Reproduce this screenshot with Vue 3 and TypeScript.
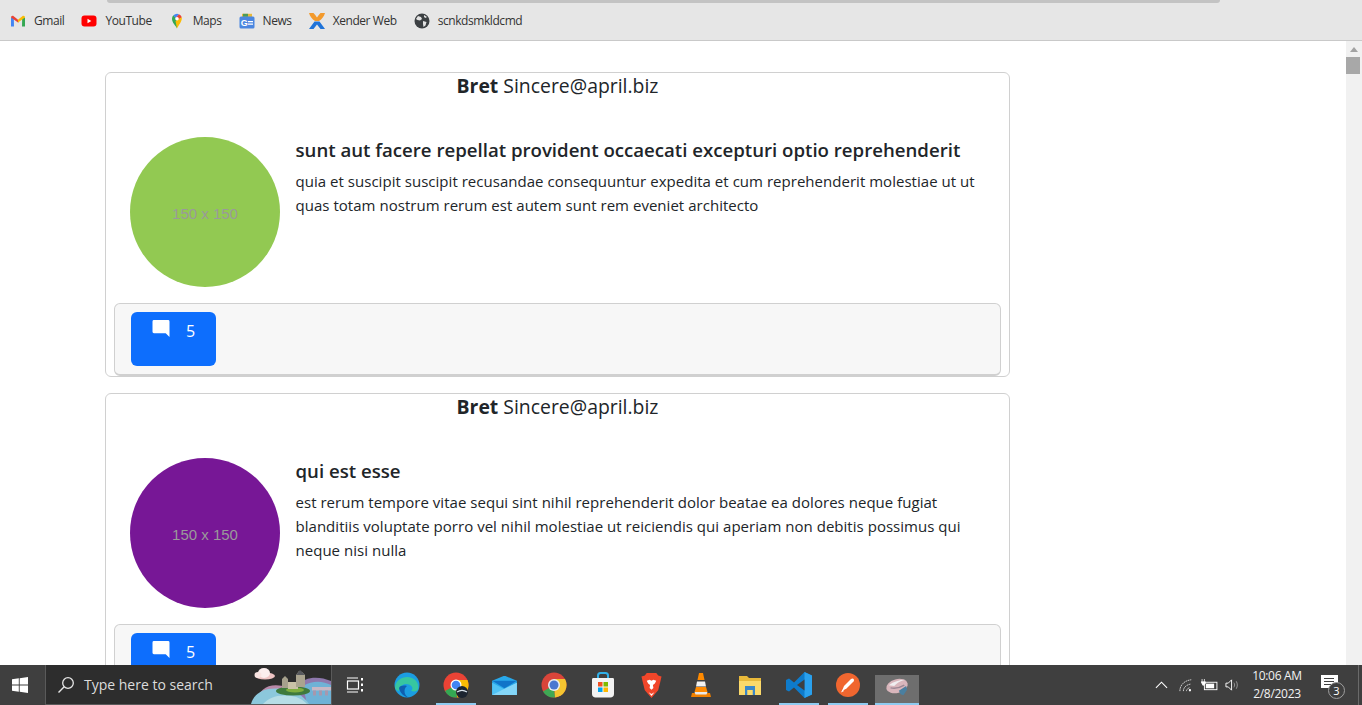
<script setup lang="ts">
interface Post {
  id: number
  title: string
  body: string
  color: string
}

const bookmarks: { name: string; kind: string }[] = [
  { name: 'Gmail', kind: 'gmail' },
  { name: 'YouTube', kind: 'youtube' },
  { name: 'Maps', kind: 'maps' },
  { name: 'News', kind: 'news' },
  { name: 'Xender Web', kind: 'xender' },
  { name: 'scnkdsmkldcmd', kind: 'globe' }
]

const posts: Post[] = [
  {
    id: 1,
    title: 'sunt aut facere repellat provident occaecati excepturi optio reprehenderit',
    body: 'quia et suscipit suscipit recusandae consequuntur expedita et cum reprehenderit molestiae ut ut quas totam nostrum rerum est autem sunt rem eveniet architecto',
    color: '#92c952'
  },
  {
    id: 2,
    title: 'qui est esse',
    body: 'est rerum tempore vitae sequi sint nihil reprehenderit dolor beatae ea dolores neque fugiat blanditiis voluptate porro vel nihil molestiae ut reiciendis qui aperiam non debitis possimus qui neque nisi nulla',
    color: '#771796'
  }
]
</script>

<template>
  <div class="screen">
    <header class="browser-bar">
      <div class="tab-strip"><span class="tab-pill"></span></div>
      <nav class="bookmarks">
        <a v-for="b in bookmarks" :key="b.name" class="bookmark">
          <svg class="bm-icon" viewBox="0 0 16 16">
            <template v-if="b.kind === 'gmail'">
              <path d="M1 13.500V4.500L3.800 5 4 13.500z" fill="#4285f4" />
              <path d="M15 13.500V4.500L12.200 5 12 13.500z" fill="#34a853" />
              <path d="M1 4.500C1 3 2.500 2.200 3.700 3.200L8 6.800l1 2.200-1 .5L1 4.500z" fill="#ea4335" />
              <path d="M15 4.500C15 3 13.500 2.200 12.300 3.200L8 6.800v2.700L15 4.500z" fill="#fbbc04" />
            </template>
            <template v-else-if="b.kind === 'youtube'">
              <rect x="0.500" y="2.500" width="15" height="11" rx="3" fill="#f00" />
              <path d="M6.500 5.800v4.400L10.300 8z" fill="#fff" />
            </template>
            <template v-else-if="b.kind === 'maps'">
              <path d="M8 15.500C6.800 12.500 3 10 3 5.800a5 5 0 0 1 1.500-3.500L8 6z" fill="#34a853" />
              <path d="M4.500 2.300A5 5 0 0 1 8 .8 5 5 0 0 1 10 1.200L6.500 5z" fill="#4285f4" />
              <path d="M10 1.200a5 5 0 0 1 2.800 3L9 7 6.500 5z" fill="#ea4335" />
              <path d="M12.800 4.200C13.400 8.500 9.500 12 8 15.500L6.500 8z" fill="#fbbc04" />
              <circle cx="8" cy="5.800" r="1.800" fill="#fff" />
            </template>
            <template v-else-if="b.kind === 'news'">
              <rect x="3" y="0.800" width="10" height="5" fill="#e8b93a" />
              <rect x="4" y="0.800" width="5" height="3" fill="#4c9b56" />
              <rect x="0.500" y="3.500" width="15" height="12" rx="1.500" fill="#4a86e0" />
              <text x="1.800" y="12.500" class="news-glyph">G</text>
              <path d="M9 8h5v1.300H9zM9 10.500h5v1.300H9z" fill="#fff" />
            </template>
            <template v-else-if="b.kind === 'xender'">
              <path d="M0 0h4.500C6 1.500 7 3 8 4.500 9 3 10 1.500 11.500 0H16c-1 3.500-3 6-6 8H6C3 6 1 3.500 0 0z" fill="#f39a2c" />
              <path d="M5.500 8.500h5L16 16h-4.500L8 11.500 4.500 16H0z" fill="#1f73d8" />
            </template>
            <template v-else>
              <circle cx="8" cy="8" r="7.500" fill="#3c4043" />
              <path d="M4 3l3 1 1 2-2 1.500L3.500 7 2 6zM9 8l3.500 1-1 3.500L9.500 14 9 11zM10 2l3 2-1.500 1L10 4z" fill="#e3e3e3" />
            </template>
          </svg>
          <span>{{ b.name }}</span>
        </a>
      </nav>
    </header>

    <div class="viewport">
      <main class="page">
        <article v-for="post in posts" :key="post.id" class="card">
          <h5 class="card-head"><b>Bret</b> Sincere@april.biz</h5>
          <div class="card-body">
            <div class="avatar" :style="{ background: post.color }">150 x 150</div>
            <div class="copy">
              <h5 class="title">{{ post.title }}</h5>
              <p class="body-text">{{ post.body }}</p>
            </div>
          </div>
          <footer class="card-foot">
            <button class="btn" type="button">
              <svg class="chat" viewBox="0 0 18 18">
                <path d="M1.500 0h15A1.500 1.500 0 0 1 18 1.500V18l-4-4H1.500A1.500 1.500 0 0 1 0 12.500v-11A1.500 1.500 0 0 1 1.500 0z" fill="#fff" />
              </svg>
              <span class="count">5</span>
            </button>
          </footer>
        </article>
      </main>
      <aside class="scrollbar">
        <svg class="arrow" viewBox="0 0 8 5"><path d="M4 0l4 5H0z" fill="#a3a3a3" /></svg>
        <span class="thumb"></span>
      </aside>
    </div>

    <footer class="taskbar">
      <div class="start">
        <svg viewBox="0 0 16 16" width="16" height="16">
          <path d="M0 2.300 6.800 1.300V7.500H0zM7.700 1.200 16 0V7.500H7.700zM0 8.400H6.800V14.700L0 13.700zM7.700 8.400H16V16L7.700 14.800z" fill="#fff" />
        </svg>
      </div>
      <div class="search">
        <svg viewBox="0 0 18 18" width="18" height="18" class="search-icon">
          <circle cx="11" cy="7" r="5.300" fill="none" stroke="#e6e6e6" stroke-width="1.300" />
          <path d="M7.200 10.800 1.500 16.500" stroke="#e6e6e6" stroke-width="1.400" />
        </svg>
        <span class="search-text">Type here to search</span>
        <svg class="scene" viewBox="0 0 80 38" width="80" height="38">
          <path d="M4 38C8 22 18 17 32 20l8 18z" fill="#b889a8" />
          <path d="M46 20c8-10 22-10 34-5v23H50z" fill="#8e78ad" />
          <path d="M52 20c10-6 20-5 28-1v19H56z" fill="#6fb2d6" />
          <path d="M0 38c3-11 14-17 30-15 14 2 22 6 28 15z" fill="#8cc8dc" />
          <path d="M12 38c6-7 16-10 28-8 8 1 12 4 16 8z" fill="#b7dde6" />
          <ellipse cx="42" cy="25" rx="17" ry="4.500" fill="#3f7a3c" />
          <ellipse cx="44" cy="24" rx="9" ry="2.500" fill="#7fae3e" />
          <path d="M31 13l3-3 3 3v9h-6z" fill="#a5a08c" />
          <path d="M37 16h10v7H37z" fill="#c9c2a6" />
          <path d="M45 9l3-4 3 1 3 3v12h-9z" fill="#aaa48f" />
          <path d="M45 9l4-5 5 5z" fill="#57595e" />
          <path d="M61 21h19v3.500H61z" fill="#c9b7c4" />
          <path d="M62 24.500h3v5h-3zM68 24.500h3v5h-3zM74 24.500h3v5h-3z" fill="#a797ad" />
          <ellipse cx="14" cy="10" rx="10" ry="3.500" fill="#eec4c4" />
          <ellipse cx="13" cy="7" rx="6" ry="5" fill="#fbeeee" />
          <ellipse cx="7" cy="9" rx="3.500" ry="3" fill="#f9e4e2" />
        </svg>
      </div>
      <div class="taskview">
        <svg viewBox="0 0 18 16" width="18" height="16">
          <path d="M1 1h11M1 15h11" stroke="#fff" stroke-width="1.200" />
          <rect x="1.500" y="4" width="11" height="8" fill="none" stroke="#fff" stroke-width="1.200" />
          <path d="M15 1h2v2.500h-2zM15 6.500h2V9h-2zM15 12h2v2.500h-2z" fill="#fff" />
        </svg>
      </div>

      <div class="apps">
        <div class="app">
          <svg viewBox="0 0 26 26" width="26" height="26">
            <circle cx="13" cy="13" r="12.500" fill="#1b9de2" />
            <path d="M1 15C2 7 11 3 18 6c5 2 7 7 6 11-1 3-5 3-7 1.500 2-.5 2-4-1-5.500-5-2.500-10 0-11 6-2-.5-3.500-1.500-4-3z" fill="#37c6a0" />
            <path d="M5 16c1 5 5 9 10 9.500C10 24 9 17 13 14c-3-1-7-.5-8 2z" fill="#0f5fb0" />
          </svg>
        </div>
        <div class="app active">
          <svg viewBox="0 0 26 26" width="26" height="26">
            <circle cx="13" cy="13" r="12.500" fill="#ea4335" />
            <path d="M13 13 2 19a12.500 12.500 0 0 0 12 6.500z" fill="#34a853" />
            <path d="M13 8h11.500a12.500 12.500 0 0 1-10.500 17.500z" fill="#fbbc04" />
            <circle cx="13" cy="13" r="5.500" fill="#fff" />
            <circle cx="13" cy="13" r="4.300" fill="#4285f4" />
            <circle cx="19" cy="20" r="6" fill="#1c2430" />
            <path d="M14 20c3-2 7-2 10 0" stroke="#d9e2ea" stroke-width="1.300" fill="none" />
          </svg>
        </div>
        <div class="app">
          <svg viewBox="0 0 26 20" width="25" height="19">
            <path d="M0 5 12 0h2l12 5v15H0z" fill="#28a8ea" />
            <path d="M0 5h26L13 13z" fill="#1074c9" />
            <path d="M0 7 13 14 26 7v13H0z" fill="#50c2f4" />
            <path d="M26 7v13H0l14-7z" fill="#84d6f8" />
          </svg>
        </div>
        <div class="app">
          <svg viewBox="0 0 26 26" width="26" height="26">
            <circle cx="13" cy="13" r="12.500" fill="#d9453a" />
            <path d="M13 13 2 19.500a12.500 12.500 0 0 0 12 6z" fill="#3fa854" />
            <path d="M13 7h11a12.500 12.500 0 0 1-10 18.500z" fill="#f4c430" />
            <circle cx="13" cy="13" r="6" fill="#e9eef3" />
            <circle cx="13" cy="13" r="4.500" fill="#4a77d0" />
          </svg>
        </div>
        <div class="app">
          <svg viewBox="0 0 24 26" width="24" height="26">
            <path d="M7 6V3.500C7 2 8 1 9.500 1h5C16 1 17 2 17 3.500V6" fill="none" stroke="#31b0e8" stroke-width="2" />
            <path d="M1 7.500C1 6.500 1.500 6 2.500 6h19c1 0 1.500.5 1.500 1.500V22c0 2-1.500 3.500-3.500 3.500h-15C2.500 25.500 1 24 1 22z" fill="#f3f3f3" />
            <rect x="7" y="10" width="4.500" height="4.500" fill="#f25022" />
            <rect x="12.500" y="10" width="4.500" height="4.500" fill="#7fba00" />
            <rect x="7" y="15.500" width="4.500" height="4.500" fill="#00a4ef" />
            <rect x="12.500" y="15.500" width="4.500" height="4.500" fill="#ffb900" />
          </svg>
        </div>
        <div class="app">
          <svg viewBox="0 0 22 26" width="21" height="25">
            <path d="M6 0h10l2 2.500 3.500 1-1 4.500-2.500 10-7 8-7-8L1.500 8 .5 3.500 4 2.500z" fill="#f1462a" />
            <path d="M6 8l3-1 2 1 2-1 3 1-1.500 3-2 1.500.5 3-2 2-2-2 .5-3-2-1.500z" fill="#fff" />
            <path d="M8 20l3 2 3-2-3 4z" fill="#fff" />
          </svg>
        </div>
        <div class="app">
          <svg viewBox="0 0 20 26" width="20" height="26">
            <path d="M8 1h4l1.500 7h-7z" fill="#ff8a00" />
            <path d="M6 9.500h8l1 5H5z" fill="#f1f1f1" />
            <path d="M5 15h10l1.500 5h-13z" fill="#ff8a00" />
            <path d="M1 21h18l1 4H0z" fill="#f08000" />
            <path d="M3.500 20h13l-1 2.500h-11z" fill="#e9e9e9" />
          </svg>
        </div>
        <div class="app">
          <svg viewBox="0 0 22 20" width="22" height="20">
            <path d="M0 1h8l2 2h12v17H0z" fill="#e8b93a" />
            <path d="M0 6h22v14H0z" fill="#fbd96a" />
            <path d="M6 11h10v9h-2.500v-5h-5v5H6z" fill="#3a87c8" />
            <rect x="8.500" y="15" width="5" height="5" fill="#fbd96a" />
          </svg>
        </div>
        <div class="app active">
          <svg viewBox="0 0 26 26" width="26" height="26">
            <path d="M18.500 0 26 3.500v19L18.500 26 8 15.500 3 19.500 0 18V8l3-1.500 5 4z" fill="#0e7bcb" />
            <path d="M18.500 0 26 3.500v19L18.500 26z" fill="#2aa1ee" />
            <path d="M18.500 7.500v11L11 13z" fill="#3f3f3f" />
          </svg>
        </div>
        <div class="app active">
          <svg viewBox="0 0 24 24" width="24" height="24">
            <circle cx="12" cy="12" r="12" fill="#f0662f" />
            <path d="M6 18l2-5 7-7c2-1.500 4 .5 2.500 2.500l-7 7z" fill="#fff" />
            <path d="M5 19.500l3-1.500-1.500-1.500z" fill="#fff" />
          </svg>
        </div>
        <div class="app active current">
          <svg viewBox="0 0 26 24" width="26" height="22">
            <ellipse cx="13" cy="11" rx="12" ry="7.500" fill="#d9b6bc" transform="rotate(-15 13 11)" />
            <path d="M4 10c5-4 12-6 18-6-5 1-10 4-12 7z" fill="#f0eef0" />
            <path d="M6 13c5 1 10 0 15-3" stroke="#9c8794" stroke-width="1.500" fill="none" />
            <path d="M15 16l8-5 1 4-4 6-3-1z" fill="#4a7fa0" />
          </svg>
        </div>
      </div>

      <div class="tray">
        <svg viewBox="0 0 14 8" width="13" height="8" class="caret">
          <path d="M1 7l6-6 6 6" fill="none" stroke="#fff" stroke-width="1.200" />
        </svg>
        <svg viewBox="0 0 16 16" width="14" height="14" class="wifi">
          <path d="M1 15C1 8 6 3 14 2M5 15c0-4 3-7 8-8M8.500 15c0-2 2-3.500 4-4" fill="none" stroke="#cfcfcf" stroke-width="1.100" stroke-dasharray="2 .7" />
          <circle cx="12.500" cy="14" r="1.300" fill="#fff" />
        </svg>
        <svg viewBox="0 0 18 14" width="17" height="13" class="battery">
          <rect x="3.500" y="3.500" width="13.500" height="8" fill="none" stroke="#fff" />
          <rect x="5" y="5" width="9" height="5" fill="#fff" />
          <path d="M1 0v3M3.500 0v3M0 3h4.500v2L2 7z" stroke="#fff" stroke-width=".8" fill="#fff" />
        </svg>
        <svg viewBox="0 0 16 14" width="15" height="14" class="speaker">
          <path d="M1 5h2.500L7 1.500v11L3.500 9H1z" fill="none" stroke="#fff" />
          <path d="M9.500 4.500c1 1.500 1 3.500 0 5M12 3c1.500 2.500 1.500 5.500 0 8" fill="none" stroke="#9a9a9a" />
        </svg>
        <div class="clock">
          <span>10:06 AM</span>
          <span>2/8/2023</span>
        </div>
        <div class="notify">
          <svg viewBox="0 0 17 17" width="17" height="17">
            <path d="M0 0h17v13h-6l-3 3v-3H0z" fill="#fff" />
            <path d="M3 3.500h10M3 6.500h10M3 9.500h7" stroke="#3f3f3f" />
          </svg>
          <span class="badge">3</span>
        </div>
        <span class="desktop-edge"></span>
      </div>
    </footer>
  </div>
</template>

<style>
html,
body {
  margin: 0;
  overflow: hidden;
}
</style>

<style scoped>
.screen {
  width: 1362px;
  height: 705px;
  display: flex;
  flex-direction: column;
  overflow: hidden;
  background: #fff;
  font-family: "Open Sans", "Noto Sans", sans-serif;
  color: #212529;
}

.browser-bar {
  flex: 0 0 41px;
  box-sizing: border-box;
  background: #e6e6e6;
  border-bottom: 1px solid #c9c9c9;
  display: flex;
  flex-direction: column;
}
.tab-strip {
  height: 3px;
  padding-left: 107px;
}
.tab-pill {
  display: block;
  width: 1113px;
  height: 3px;
  background: #c3c3c3;
  border-radius: 0 0 6px 6px;
}
.bookmarks {
  display: flex;
  align-items: center;
  gap: 17px;
  padding: 10px 0 0 10px;
}
.bookmark {
  display: flex;
  align-items: center;
  gap: 8px;
  font-size: 12px;
  line-height: 16px;
  color: #333;
  letter-spacing: -0.43px;
}
.bm-icon {
  width: 16px;
  height: 16px;
  flex: none;
}
.news-glyph {
  font: 700 9px "Liberation Sans", sans-serif;
  fill: #fff;
}

.viewport {
  flex: 1;
  min-height: 0;
  display: flex;
  overflow: hidden;
}
.page {
  flex: 1;
  padding: 31px 0 0 105px;
  display: flex;
  flex-direction: column;
  gap: 16px;
  overflow: hidden;
}
.scrollbar {
  width: 16px;
  flex: none;
  background: #f1f1f1;
  display: flex;
  flex-direction: column;
  align-items: flex-start;
}
.arrow {
  width: 8px;
  height: 5px;
  margin: 6px 0 0 4px;
}
.thumb {
  width: 14px;
  height: 17px;
  margin-top: 5px;
  background: #a8a8a8;
}

.card {
  flex: none;
  box-sizing: border-box;
  width: 905px;
  height: 305px;
  border: 1px solid #d0d0d0;
  border-radius: 6px;
  display: flex;
  flex-direction: column;
}
.card-head {
  margin: 0;
  text-align: center;
  font-size: 19.4px;
  font-weight: 400;
  line-height: 26px;
}
.card-head b {
  font-weight: 700;
}
.card-body {
  flex: 1;
  display: flex;
  gap: 15.5px;
  padding: 38px 24px 0;
}
.avatar {
  flex: none;
  width: 150px;
  height: 150px;
  border-radius: 50%;
  display: flex;
  align-items: center;
  justify-content: center;
  font: 15px "Liberation Sans", sans-serif;
  color: #9a9a9a;
  padding-top: 3px;
  box-sizing: border-box;
}
.copy {
  flex: 1;
  padding-top: 1px;
}
.title {
  margin: 0 0 7px;
  font-size: 18.64px;
  line-height: 24px;
  font-weight: 600;
}
.body-text {
  margin: 0;
  font-size: 15px;
  line-height: 24px;
  letter-spacing: 0.03px;
}
.card-foot {
  flex: none;
  box-sizing: border-box;
  height: 73px;
  margin: 0 8px;
  padding: 8px 16px;
  background: #f7f7f7;
  border: 1px solid #d0d0d0;
  border-bottom-width: 2px;
  border-radius: 6px;
}
.btn {
  width: 85px;
  height: 54px;
  border: 0;
  border-radius: 6px;
  background: #0d6efd;
  color: #fff;
  display: flex;
  align-items: flex-start;
  padding: 8px 0 0 21px;
  font: inherit;
}
.chat {
  width: 18px;
  height: 17px;
  flex: none;
}
.count {
  margin: 0 0 0 16px;
  font-size: 16px;
  line-height: 22px;
}

.taskbar {
  flex: 0 0 40px;
  background: #3f3f3f;
  display: flex;
  align-items: stretch;
  color: #fff;
}
.start {
  width: 45px;
  flex: none;
  display: flex;
  align-items: center;
  padding-left: 12px;
  box-sizing: border-box;
}
.search {
  width: 287px;
  flex: none;
  box-sizing: border-box;
  background: #2d2d2d;
  border: 1px solid #5a5a5a;
  border-width: 0 1px 1px;
  display: flex;
  align-items: center;
  padding-left: 11px;
  overflow: hidden;
}
.search-icon {
  flex: none;
}
.search-text {
  flex: 1;
  margin-left: 9px;
  font-size: 14px;
  color: #dcdcdc;
}
.scene {
  flex: none;
  align-self: flex-end;
}
.taskview {
  width: 50px;
  flex: none;
  display: flex;
  align-items: center;
  justify-content: center;
  padding-right: 4px;
  box-sizing: border-box;
}
.apps {
  display: flex;
}
.app {
  width: 49px;
  flex: none;
  display: flex;
  align-items: center;
  justify-content: center;
  box-sizing: border-box;
  padding-bottom: 2px;
  padding-top: 2px;
}
.app.active {
  background: linear-gradient(#8ecbf1, #8ecbf1) center bottom / 40px 2px no-repeat;
}
.app.current {
  background:
    linear-gradient(#8ecbf1, #8ecbf1) center bottom / 44px 2px no-repeat,
    linear-gradient(#6e6e6e, #6e6e6e) center 10px / 44px 28px no-repeat;
  padding-top: 6px;
}
.tray {
  flex: 1;
  display: flex;
  align-items: center;
  padding-left: 234px;
}
.caret {
  flex: none;
}
.wifi {
  flex: none;
  margin-left: 11px;
}
.battery {
  flex: none;
  margin-left: 8px;
}
.speaker {
  flex: none;
  margin-left: 7px;
}
.clock {
  flex: none;
  width: 62px;
  margin-left: 6px;
  display: flex;
  flex-direction: column;
  align-items: center;
  font-size: 12px;
  line-height: 18px;
  letter-spacing: -0.3px;
  color: #f2f2f2;
}
.notify {
  position: relative;
  flex: none;
  margin-left: 13px;
  height: 17px;
  width: 17px;
  margin-top: -3px;
}
.badge {
  position: absolute;
  left: 7px;
  top: 7px;
  width: 15px;
  height: 15px;
  border-radius: 50%;
  background: #3f3f3f;
  border: 1px solid #9f9f9f;
  font-size: 11px;
  line-height: 15px;
  text-align: center;
}
.desktop-edge {
  width: 1px;
  height: 40px;
  margin-left: auto;
  margin-right: 3px;
  background: #6a6a6a;
}
</style>
